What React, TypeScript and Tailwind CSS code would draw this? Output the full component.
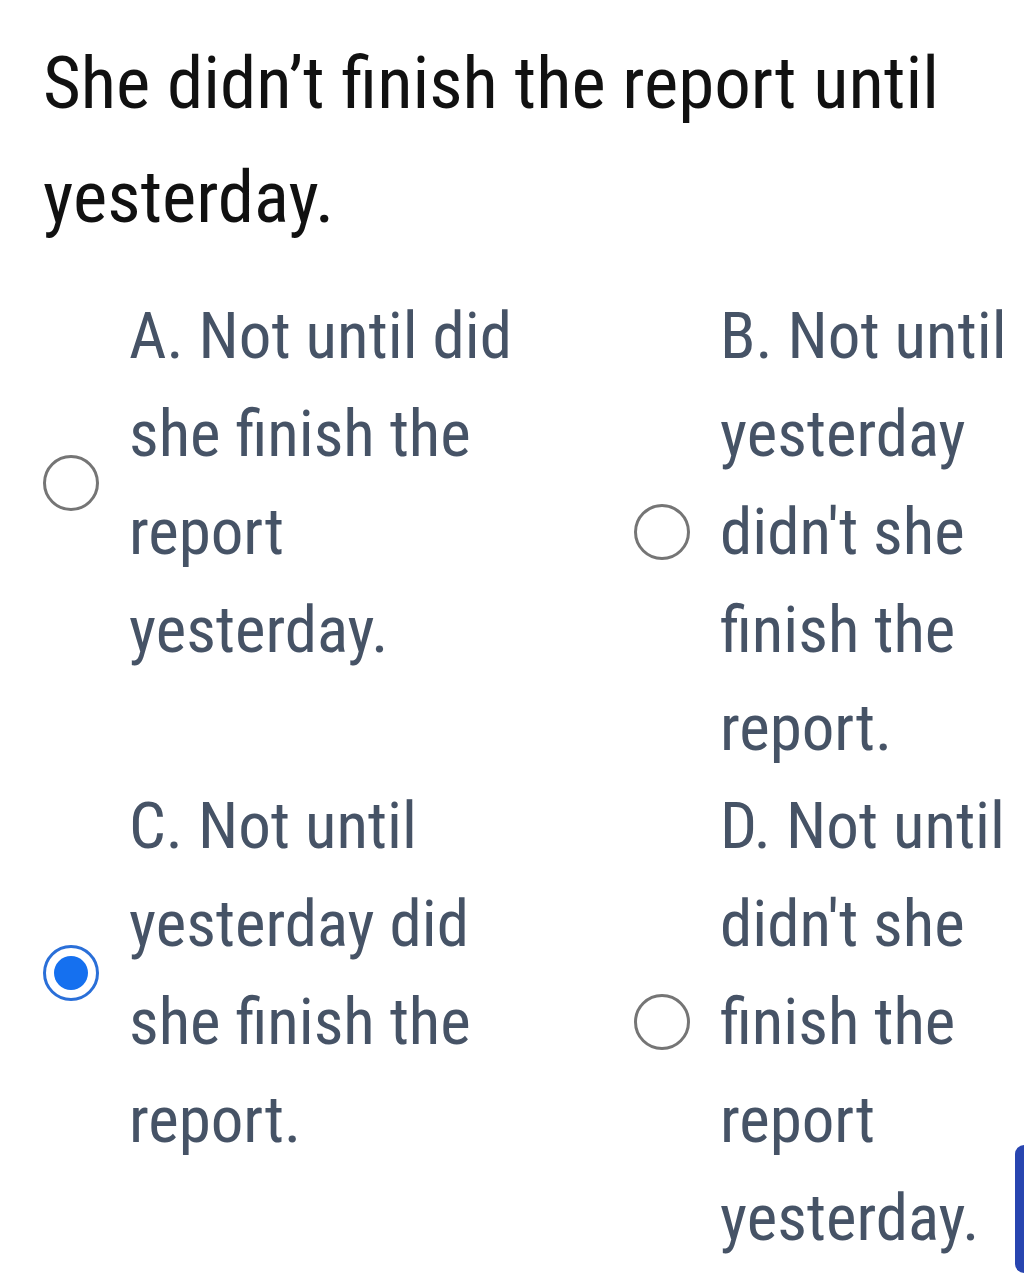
import React from 'react';

type Option = {
  key: string;
  lines: string[];
  selected?: boolean;
};

const rows: Option[][] = [
  [
    { key: 'A', lines: ['A. Not until did', 'she finish the', 'report', 'yesterday.'] },
    { key: 'B', lines: ['B. Not until', 'yesterday', "didn't she", 'finish the', 'report.'] },
  ],
  [
    { key: 'C', lines: ['C. Not until', 'yesterday did', 'she finish the', 'report.'], selected: true },
    { key: 'D', lines: ['D. Not until', "didn't she", 'finish the', 'report', 'yesterday.'] },
  ],
];

const Radio: React.FC<{ selected?: boolean }> = ({ selected }) =>
  selected ? (
    <span className="flex h-[56px] w-[56px] shrink-0 items-center justify-center rounded-full border-[3px] border-[#2a6fd8] bg-white">
      <span className="h-[34px] w-[34px] rounded-full bg-[#1570ef]" />
    </span>
  ) : (
    <span className="h-[56px] w-[56px] shrink-0 rounded-full border-[3px] border-[#757575] bg-white" />
  );

const Choice: React.FC<{ option: Option; wide: boolean }> = ({ option, wide }) => (
  <label className={`flex items-center gap-[30px] ${wide ? 'w-[591px]' : 'w-[390px]'}`}>
    <Radio selected={option.selected} />
    <span className="flex flex-col text-[65px] leading-[98px] text-[#465366]">
      {option.lines.map((line, i) => (
        <span key={i} className="whitespace-nowrap">
          {line}
        </span>
      ))}
    </span>
  </label>
);

export default function App() {
  return (
    <div
      className="relative h-[1280px] w-[1024px] overflow-hidden bg-white pl-[43px] pt-[26px] font-stretch-[80%]"
      style={{ fontFamily: '"Roboto Condensed", Roboto, "Liberation Sans", sans-serif' }}
    >
      <h1 className="text-[73px] leading-[114px] font-normal text-[#111111]">
        She didn’t finish the report until
        <br />
        yesterday.
      </h1>

      <div className="mt-[33px] flex flex-col">
        {rows.map((row, r) => (
          <div key={r} className="flex items-start">
            {row.map((opt, c) => (
              <Choice key={opt.key} option={opt} wide={c === 0} />
            ))}
          </div>
        ))}
      </div>

      <div className="absolute right-0 top-[1145px] h-[128px] w-[9px] rounded-l-[14px] bg-[#2845b0]" />
    </div>
  );
}
